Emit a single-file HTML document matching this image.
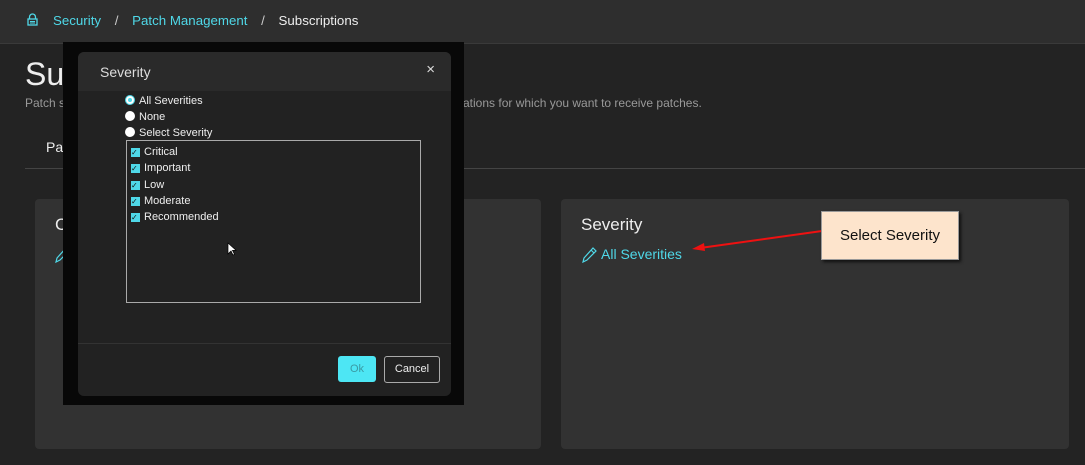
<!DOCTYPE html>
<html><head><style>
body{margin:0;width:1085px;height:465px;background:#232323;font-family:"Liberation Sans",sans-serif;position:relative;overflow:hidden}
.a{position:absolute}
</style></head><body>
<div class="a" style="left:0;top:0;width:1085px;height:43px;background:#2e2e2e;border-bottom:1px solid #3a3a3a"></div>
<svg class="a" style="left:27px;top:13px" width="11" height="13" viewBox="0 0 11 13"><path d="M2.5 6V4a3 3 0 0 1 6 0v2" stroke="#4fd8e8" fill="none" stroke-width="1.3"/><rect x="1" y="6" width="9" height="6" fill="none" stroke="#4fd8e8" stroke-width="1.3"/><path d="M3 8.5h5M3 10h5" stroke="#4fd8e8"/></svg>
<div class="a" style="left:53px;top:13px;font-size:13.3px;color:#4fd8e8">Security <span style="color:#ccc;margin:0 10px">/</span> Patch Management <span style="color:#ccc;margin:0 10px">/</span> <span style="color:#eee">Subscriptions</span></div>
<div class="a" style="left:25px;top:56px;font-size:32px;color:#eee">Sub</div>
<div class="a" style="left:25px;top:96px;font-size:12px;color:#999">Patch s</div>
<div class="a" style="left:463px;top:96px;font-size:12px;color:#999">ations for which you want to receive patches.</div>
<div class="a" style="left:46px;top:139px;font-size:14px;color:#eee">Pa</div>
<div class="a" style="left:25px;top:168px;width:1060px;height:1px;background:#444"></div>
<div class="a" style="left:35px;top:199px;width:506px;height:250px;background:#323232;border-radius:4px"></div>
<div class="a" style="left:55px;top:215px;font-size:17px;color:#eee">C</div>
<svg class="a" style="left:55px;top:246px" width="15" height="17" viewBox="0 0 15 17"><path d="M1 16l1-4L11 2l3 3-9 9z" stroke="#4fd8e8" fill="none" stroke-width="1.2"/></svg>
<div class="a" style="left:561px;top:199px;width:508px;height:250px;background:#323232;border-radius:4px"></div>
<div class="a" style="left:581px;top:215px;font-size:17px;color:#eee">Severity</div>
<svg class="a" style="left:582px;top:246px" width="15" height="17" viewBox="0 0 15 17"><path d="M1 16l1-4L11 2l3 3-9 9z M9 4l3 3" stroke="#4fd8e8" fill="none" stroke-width="1.2"/></svg>
<div class="a" style="left:601px;top:246px;font-size:14px;color:#4fd8e8">All Severities</div>
<svg class="a" style="left:690px;top:225px" width="135" height="30"><path d="M132 6L10 23" stroke="#e11" stroke-width="2"/><path d="M2 24l12-6 1 8z" fill="#e11"/></svg>
<div class="a" style="left:821px;top:211px;width:136px;height:47px;background:#fde4cc;border:1px solid #999;box-shadow:2px 2px 3px #111;font-size:15px;color:#111;line-height:47px;text-align:center">Select Severity</div>
<div class="a" style="left:63px;top:42px;width:401px;height:363px;background:#080808"></div>
<div class="a" style="left:78px;top:52px;width:373px;height:344px;background:#222;border-radius:6px;overflow:hidden">
 <div style="height:39px;background:#2a2a2a;position:relative"><div class="a" style="left:22px;top:12px;font-size:14px;color:#ddd">Severity</div><div class="a" style="right:16px;top:9px;font-size:15px;color:#ddd">×</div></div>
 <div class="a" style="left:0;top:291px;width:373px;height:1px;background:#333"></div>
 <div class="a" style="left:260px;top:304px;width:38px;height:26px;background:#4de6f4;border-radius:3px;color:#3a9aa4;font-size:11px;line-height:26px;text-align:center">Ok</div>
 <div class="a" style="left:306px;top:304px;width:54px;height:25px;border:1px solid #aaa;border-radius:3px;color:#eee;font-size:11px;line-height:25px;text-align:center">Cancel</div>
</div>
<div class="a" style="left:125px;top:93px;font-size:11px;color:#eee;line-height:16px">
<div><span style="display:inline-block;width:8px;height:8px;border-radius:50%;background:#fff;border:1px solid #4fd8e8;box-shadow:inset 0 0 0 2px #fff,inset 0 0 0 4px #4fd8e8;margin-right:4px;vertical-align:-1px"></span>All Severities</div>
<div><span style="display:inline-block;width:10px;height:10px;border-radius:50%;background:#fff;margin-right:4px;vertical-align:-1px"></span>None</div>
<div><span style="display:inline-block;width:10px;height:10px;border-radius:50%;background:#fff;margin-right:4px;vertical-align:-1px"></span>Select Severity</div>
</div>
<div class="a" style="left:126px;top:140px;width:295px;height:163px;border:1px solid #aaa;background:#222;font-size:11px;color:#eee;line-height:16.3px;padding:3px 0 0 4px;box-sizing:border-box">
<div><span style="display:inline-block;width:9px;height:9px;background:#4fd8e8;margin-right:4px;font-size:8px;line-height:9px;color:#111">✓</span>Critical</div>
<div><span style="display:inline-block;width:9px;height:9px;background:#4fd8e8;margin-right:4px;font-size:8px;line-height:9px;color:#111">✓</span>Important</div>
<div><span style="display:inline-block;width:9px;height:9px;background:#4fd8e8;margin-right:4px;font-size:8px;line-height:9px;color:#111">✓</span>Low</div>
<div><span style="display:inline-block;width:9px;height:9px;background:#4fd8e8;margin-right:4px;font-size:8px;line-height:9px;color:#111">✓</span>Moderate</div>
<div><span style="display:inline-block;width:9px;height:9px;background:#4fd8e8;margin-right:4px;font-size:8px;line-height:9px;color:#111">✓</span>Recommended</div>
</div>
<svg class="a" style="left:227px;top:242px" width="10" height="15"><path d="M1 1v11l3-3 2 4 1.5-.7-2-4H9z" fill="#fff" stroke="#000" stroke-width=".7"/></svg>
</body></html>
